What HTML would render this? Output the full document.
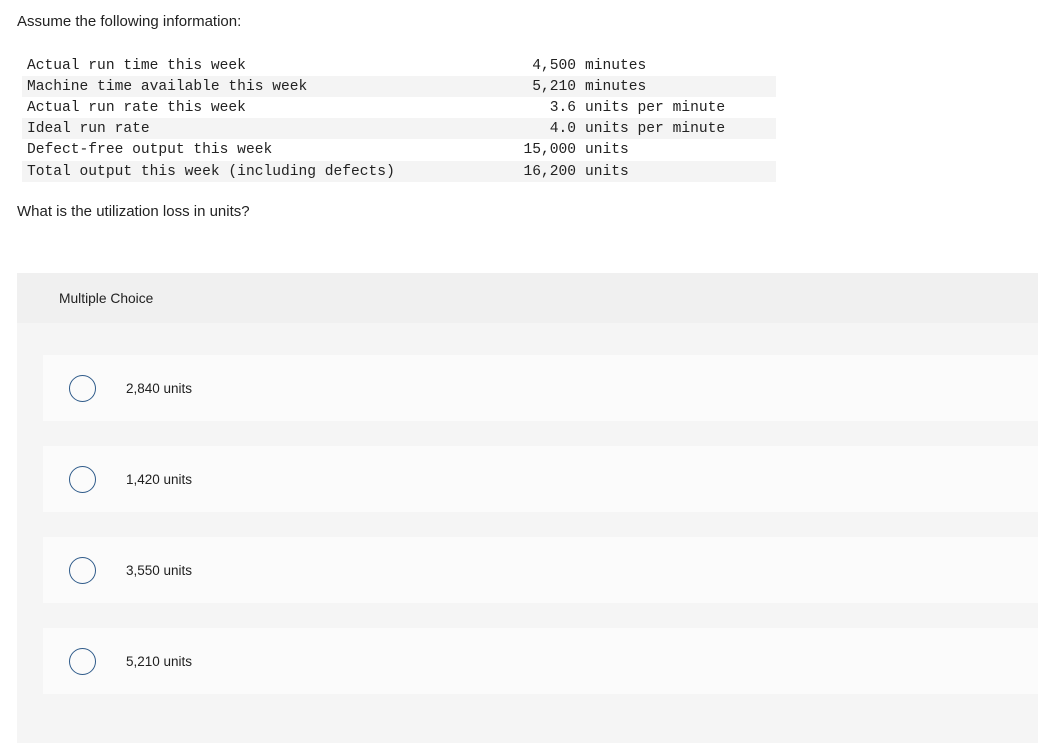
<html><head><style>
body{margin:0;width:1038px;height:743px;background:#fff;font-family:"Liberation Sans",sans-serif;color:#222;position:relative;overflow:hidden}
.a{position:absolute}
.mono{font-family:"Liberation Mono",monospace;font-size:14.6px;color:#222}
.row{position:absolute;left:22px;width:754px;height:21px}
.g{background:#f4f4f4}
.row span{position:absolute;top:3px;white-space:pre}
.opt{position:absolute;left:43px;width:995px;height:66px;background:#fbfbfb}
.opt .c{position:absolute;left:26px;top:20px;width:25px;height:25px;border:1.5px solid #2f5b8a;border-radius:50%}
.opt .t{position:absolute;left:83px;top:26px;font-size:13.5px;color:#222}
</style></head><body>
<div class="a" style="left:17px;top:13px;font-size:15px">Assume the following information:</div>
<div class="mono">
<div class="row" style="top:55px"><span style="left:5px">Actual run time this week</span><span style="right:200px">4,500</span><span style="left:563px">minutes</span></div>
<div class="row g" style="top:76px"><span style="left:5px">Machine time available this week</span><span style="right:200px">5,210</span><span style="left:563px">minutes</span></div>
<div class="row" style="top:97px"><span style="left:5px">Actual run rate this week</span><span style="right:200px">3.6</span><span style="left:563px">units per minute</span></div>
<div class="row g" style="top:118px"><span style="left:5px">Ideal run rate</span><span style="right:200px">4.0</span><span style="left:563px">units per minute</span></div>
<div class="row" style="top:139px"><span style="left:5px">Defect-free output this week</span><span style="right:200px">15,000</span><span style="left:563px">units</span></div>
<div class="row g" style="top:161px"><span style="left:5px">Total output this week (including defects)</span><span style="right:200px">16,200</span><span style="left:563px">units</span></div>
</div>
<div class="a" style="left:17px;top:203px;font-size:15px">What is the utilization loss in units?</div>
<div class="a" style="left:17px;top:273px;width:1021px;height:50px;background:#f0f0f0"></div>
<div class="a" style="left:59px;top:291px;font-size:13.8px">Multiple Choice</div>
<div class="a" style="left:17px;top:323px;width:1021px;height:420px;background:#f5f5f5"></div>
<div class="opt" style="top:355px"><div class="c"></div><div class="t">2,840 units</div></div>
<div class="opt" style="top:446px"><div class="c"></div><div class="t">1,420 units</div></div>
<div class="opt" style="top:537px"><div class="c"></div><div class="t">3,550 units</div></div>
<div class="opt" style="top:628px"><div class="c"></div><div class="t">5,210 units</div></div>
</body></html>
